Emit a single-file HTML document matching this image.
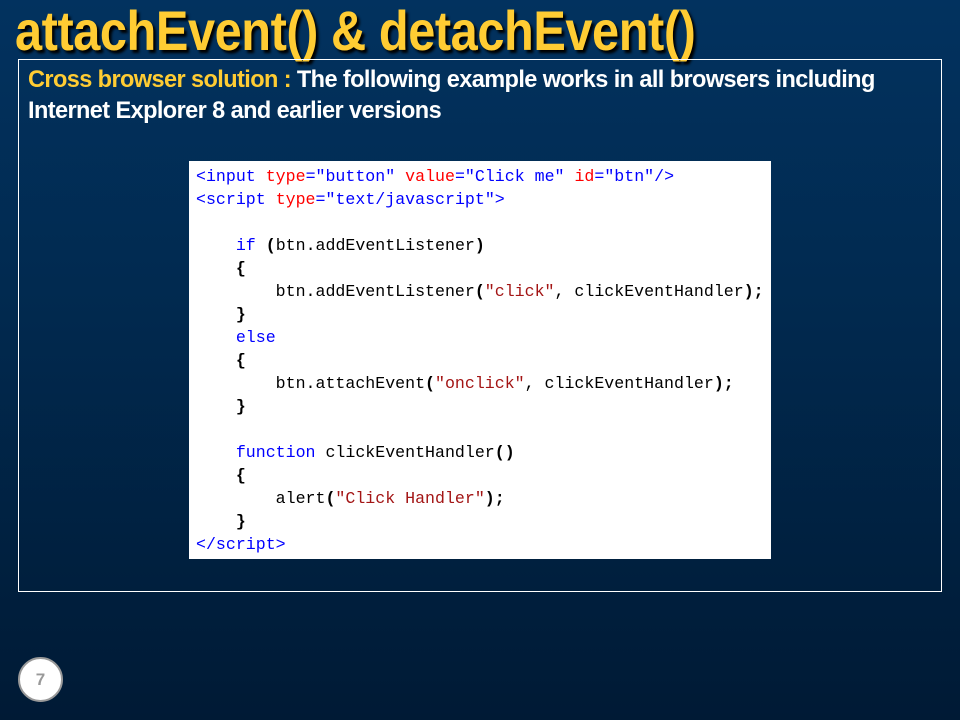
<!DOCTYPE html>
<html><head><meta charset="utf-8"><style>
body{margin:0;width:960px;height:720px;overflow:hidden;background:linear-gradient(#02325f 0%,#012a50 40%,#001a35 100%);position:relative;font-family:"Liberation Sans",sans-serif;}
.t{position:absolute;left:15px;top:-2px;color:#ffcc33;font-size:56px;font-weight:bold;white-space:nowrap;text-shadow:3px 3px 3px #000;letter-spacing:-0.5px;transform:scaleX(0.87);transform-origin:0 0;}
.box{position:absolute;left:18px;top:59px;width:922px;height:531px;border:1px solid #fff;}
.s{position:absolute;left:28px;top:64px;color:#fff;font-size:24px;font-weight:bold;line-height:31px;letter-spacing:-0.6px;white-space:nowrap;transform:scaleX(0.98);transform-origin:0 0;}
.s b{color:#ffcc33}
.code{position:absolute;left:189px;top:161px;width:582px;height:398px;background:#fff;}
pre{margin:0;position:absolute;left:7px;top:4px;font-family:"Liberation Mono",monospace;font-size:16.6px;line-height:23px;color:#000;}
.k{color:#0000ff}.a{color:#ff0000}.str{color:#a31515}.p{font-weight:bold}
.n{position:absolute;left:18px;top:657px;width:41px;height:41px;border-radius:50%;background:#fff;border:2px solid #999;color:#999;font:bold 17px "Liberation Sans",sans-serif;text-align:center;line-height:41px;}
</style></head><body>
<div class="t">attachEvent() &amp; detachEvent()</div>
<div class="box"></div>
<div class="s"><b>Cross browser solution : </b>The following example works in all browsers including<br>Internet Explorer 8 and earlier versions</div>
<div class="code"><pre><span class="k">&lt;input</span> <span class="a">type</span><span class="k">="button"</span> <span class="a">value</span><span class="k">="Click me"</span> <span class="a">id</span><span class="k">="btn"/&gt;</span>
<span class="k">&lt;script</span> <span class="a">type</span><span class="k">="text/javascript"&gt;</span>

    <span class="k">if</span> <span class="p">(</span>btn.addEventListener<span class="p">)</span>
    <span class="p">{</span>
        btn.addEventListener<span class="p">(</span><span class="str">"click"</span>, clickEventHandler<span class="p">);</span>
    <span class="p">}</span>
    <span class="k">else</span>
    <span class="p">{</span>
        btn.attachEvent<span class="p">(</span><span class="str">"onclick"</span>, clickEventHandler<span class="p">);</span>
    <span class="p">}</span>

    <span class="k">function</span> clickEventHandler<span class="p">()</span>
    <span class="p">{</span>
        alert<span class="p">(</span><span class="str">"Click Handler"</span><span class="p">);</span>
    <span class="p">}</span>
<span class="k">&lt;/script&gt;</span></pre></div>
<div class="n">7</div>
</body></html>
